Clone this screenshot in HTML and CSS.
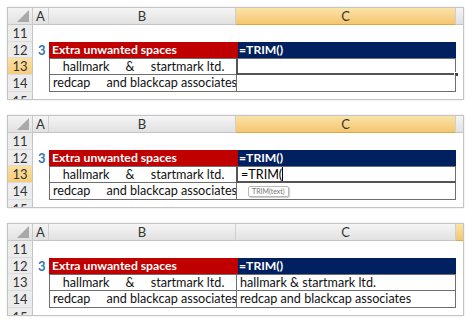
FILE: index.html
```html
<!DOCTYPE html>
<html>
  <head>
    <meta charset="UTF-8" />
    <title>TRIM</title>
    <link rel="stylesheet" href="styles.css">
  </head>
  <body>
    <!-- antes -->
    <div class="sheet">
      <div class="corner"><span class="tri"></span></div>
      <div class="colhead">A</div>
      <div class="colhead">B</div>
      <div class="colhead sel">C</div>
      <div class="colhead last"></div>

      <div class="rowhead">11</div>
      <div class="cell"></div><div class="cell"></div><div class="cell"></div><div class="cell"></div>

      <div class="rowhead">12</div>
      <div class="cell num">3</div>
      <div class="cell red">Extra unwanted spaces</div>
      <div class="cell navy">=TRIM()</div>
      <div class="cell"></div>

      <div class="rowhead sel">13</div>
      <div class="cell"></div>
      <div class="cell box top">   hallmark     &amp;     startmark ltd.</div>
      <div class="cell box top end active"><span class="handle"></span></div>
      <div class="cell"></div>

      <div class="rowhead">14</div>
      <div class="cell"></div>
      <div class="cell box">redcap     and blackcap associates</div>
      <div class="cell box end"></div>
      <div class="cell"></div>

      <div class="rowhead cut">15</div>
      <div class="cell"></div><div class="cell"></div><div class="cell"></div><div class="cell"></div>
    </div>

    <!-- escribiendo la formula -->
    <div class="sheet">
      <div class="corner"><span class="tri"></span></div>
      <div class="colhead">A</div>
      <div class="colhead">B</div>
      <div class="colhead sel">C</div>
      <div class="colhead last"></div>

      <div class="rowhead">11</div>
      <div class="cell"></div><div class="cell"></div><div class="cell"></div><div class="cell"></div>

      <div class="rowhead">12</div>
      <div class="cell num">3</div>
      <div class="cell red">Extra unwanted spaces</div>
      <div class="cell navy">=TRIM()</div>
      <div class="cell"></div>

      <div class="rowhead sel">13</div>
      <div class="cell"></div>
      <div class="cell box top">   hallmark     &amp;     startmark ltd.</div>
      <div class="cell box top end editing">=TRIM(<span class="caret"></span><span class="tip">TRIM(text)</span></div>
      <div class="cell"></div>

      <div class="rowhead">14</div>
      <div class="cell"></div>
      <div class="cell box">redcap     and blackcap associates</div>
      <div class="cell box end"></div>
      <div class="cell"></div>

      <div class="rowhead cut">15</div>
      <div class="cell"></div><div class="cell"></div><div class="cell"></div><div class="cell"></div>
    </div>

    <!-- resultado -->
    <div class="sheet">
      <div class="corner"><span class="tri"></span></div>
      <div class="colhead">A</div>
      <div class="colhead">B</div>
      <div class="colhead">C</div>
      <div class="colhead last sel"></div>

      <div class="rowhead">11</div>
      <div class="cell"></div><div class="cell"></div><div class="cell"></div><div class="cell"></div>

      <div class="rowhead">12</div>
      <div class="cell num">3</div>
      <div class="cell red">Extra unwanted spaces</div>
      <div class="cell navy">=TRIM()</div>
      <div class="cell"></div>

      <div class="rowhead">13</div>
      <div class="cell"></div>
      <div class="cell box top">   hallmark     &amp;     startmark ltd.</div>
      <div class="cell box top end">hallmark &amp; startmark ltd.</div>
      <div class="cell"></div>

      <div class="rowhead">14</div>
      <div class="cell"></div>
      <div class="cell box">redcap     and blackcap associates</div>
      <div class="cell box end">redcap and blackcap associates</div>
      <div class="cell"></div>

      <div class="rowhead cut">15</div>
      <div class="cell"></div><div class="cell"></div><div class="cell"></div><div class="cell"></div>
    </div>
  </body>
</html>
```

FILE: styles.css
```css
/* Estilos generales */
* {
  box-sizing: border-box;
}

body {
  margin: 0;
  padding: 7px 0 0 7px;
  background-color: #fff;
  font-family: Lato, "Liberation Sans", sans-serif;
  font-size: 13px;
  color: #111;
}

.sheet {
  display: grid;
  grid-template-columns: 25px 16px 187px 220px 7px;
  grid-template-rows: 17px 17px 16px 17px 17px 7px;
  width: 457px;
  margin-bottom: 15px;
  border: 1px solid #c4c4c4;
  box-shadow: 0 0 2px rgba(0, 0, 0, 0.12);
  background-color: #fff;
}

.corner {
  position: relative;
  background: linear-gradient(#f3f3f3, #e2e2e2);
  border-right: 1px solid #c9c9c9;
  border-bottom: 1px solid #c9c9c9;
}

.corner .tri {
  position: absolute;
  right: 3px;
  bottom: 2px;
  width: 0;
  height: 0;
  border-left: 12px solid transparent;
  border-bottom: 12px solid #a9a9a9;
}

.colhead {
  background: linear-gradient(#f5f5f5, #e1e1e1);
  border-right: 1px solid #cfcfcf;
  border-bottom: 1px solid #c4c4c4;
  text-align: center;
  line-height: 16px;
  color: #333;
}

.colhead.last {
  border-right: none;
}

.colhead.sel {
  background: linear-gradient(#fbe3a8, #f4c670);
  border-bottom-color: #d9a948;
}

.rowhead {
  background: #ececec;
  border-right: 1px solid #c4c4c4;
  border-bottom: 1px solid #dcdcdc;
  text-align: center;
  line-height: 16px;
  color: #333;
  overflow: hidden;
}

.rowhead.sel {
  background: linear-gradient(#fbe0a2, #f6cc7a);
}

.rowhead.cut {
  border-bottom: none;
  line-height: 18px;
}

.cell {
  position: relative;
  padding: 0 3px;
  line-height: 16px;
  white-space: pre;
}

.num {
  color: #2e75b6;
  font-weight: bold;
  padding-left: 5px;
}

.red {
  background-color: #c00000;
  color: #fff;
  font-weight: bold;
  font-size: 12.2px;
}

.navy {
  background-color: #002060;
  color: #fff;
  font-weight: bold;
  font-size: 12.2px;
  border-left: 2px solid #c00000;
  padding-left: 1px;
}

.box {
  font-size: 12.6px;
  border-left: 1px solid #6e6e6e;
  border-bottom: 1px solid #6e6e6e;
  overflow: hidden;
}

.box.top {
  border-top: 1px solid #6e6e6e;
}

.box.end {
  border-right: 1px solid #6e6e6e;
}

.active {
  overflow: visible;
  border: 2px solid #555;
}

.active .handle {
  position: absolute;
  right: -4px;
  bottom: -4px;
  width: 5px;
  height: 5px;
  background-color: #444;
  border: 1px solid #fff;
}

.editing {
  overflow: visible;
  border: 2px solid #555;
  color: #000;
}

.editing .caret {
  display: inline-block;
  width: 1px;
  height: 14px;
  vertical-align: -2px;
  background-color: #000;
}

.tip {
  position: absolute;
  left: 10px;
  top: 19px;
  z-index: 2;
  padding: 0 3px;
  font-size: 7px;
  line-height: 9px;
  color: #777;
  background-color: #fff;
  border: 1px solid #b8b8b8;
  border-radius: 2px;
  box-shadow: 1px 1px 1px rgba(0, 0, 0, 0.2);
}
```
